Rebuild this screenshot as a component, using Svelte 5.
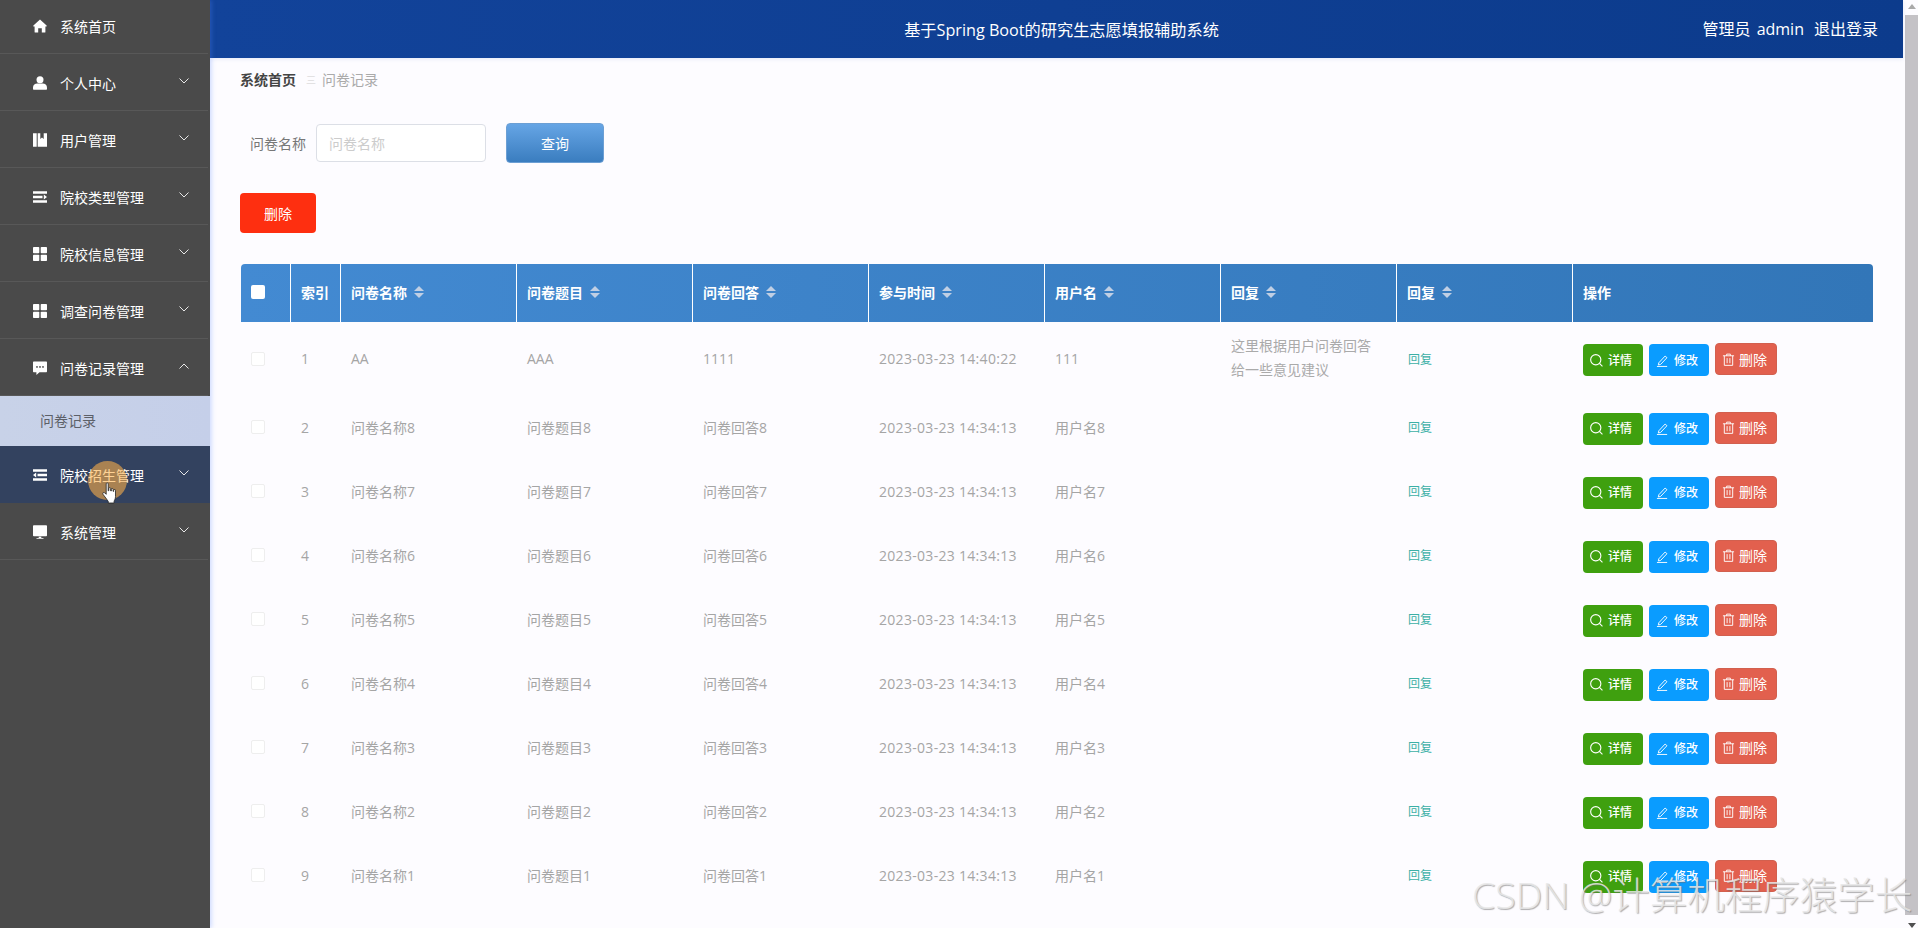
<script>
  const menu = [
    { label: '系统首页', icon: 'home' },
    { label: '个人中心', icon: 'user', arrow: 'down' },
    { label: '用户管理', icon: 'book', arrow: 'down' },
    { label: '院校类型管理', icon: 'list', arrow: 'down' },
    { label: '院校信息管理', icon: 'grid', arrow: 'down' },
    { label: '调查问卷管理', icon: 'grid', arrow: 'down' },
    { label: '问卷记录管理', icon: 'chat', arrow: 'up', sub: '问卷记录' },
    { label: '院校招生管理', icon: 'outdent', arrow: 'down', hover: true },
    { label: '系统管理', icon: 'monitor', arrow: 'down' }
  ];

  const columns = ['问卷名称', '问卷题目', '问卷回答', '参与时间', '用户名', '回复', '回复'];

  const rows = [
    { name: 'AA', title: 'AAA', answer: '1111', time: '2023-03-23 14:40:22', user: '111', reply: '这里根据用户问卷回答给一些意见建议' }
  ];
  for (let n = 8; n >= 1; n--) {
    rows.push({
      name: '问卷名称' + n,
      title: '问卷题目' + n,
      answer: '问卷回答' + n,
      time: '2023-03-23 14:34:13',
      user: '用户名' + n,
      reply: ''
    });
  }
</script>

<div class="page">
  <aside class="sidebar">
    <nav class="menu">
      {#each menu as item}
        <div class="item" class:hover={item.hover}>
          <svg class="icon" viewBox="0 0 14 14" fill="#fff">
            {#if item.icon === 'home'}
              <path d="M7 .4 .4 6.500c-.4.500 0 1.100.6 1.100h.6V13c0 .4.200.6.600.6h3V9.200h3.600v4.400h3c.4 0 .6-.2.600-.6V7.600h.6c.6 0 1-.6.6-1.100z" />
            {:else if item.icon === 'user'}
              <circle cx="7" cy="3.700" r="3.500" />
              <path d="M0 11.500c0-2.500 2-3.900 4.300-3.900h5.400C12 7.600 14 9 14 11.500v1.300c0 .6-.4 1-1 1H1c-.6 0-1-.4-1-1z" />
            {:else if item.icon === 'book'}
              <path d="M0 .3h3.700v13.400H0zM4.700 .3h2.600v5.600l1.700-1.400 1.700 1.400V.3H14v13.400H4.700z" />
            {:else if item.icon === 'list'}
              <path d="M0 1.200h14v2.500H0zM0 5.800h9.500V8.200H0zM10.800 4.600 14 7l-3.200 2.400zM0 10.300h14v2.500H0z" />
            {:else if item.icon === 'grid'}
              <rect x="0" y="0" width="6.300" height="6.300" rx=".8" />
              <rect x="7.700" y="0" width="6.300" height="6.300" rx=".8" />
              <rect x="0" y="7.700" width="6.300" height="6.300" rx=".8" />
              <rect x="7.700" y="7.700" width="6.300" height="6.300" rx=".8" />
            {:else if item.icon === 'chat'}
              <path d="M1 .6h12c.6 0 1 .4 1 1v8.600c0 .6-.4 1-1 1H6.500L3.400 14V11.200H1c-.6 0-1-.4-1-1V1.600c0-.6.4-1 1-1z" />
              <circle cx="4" cy="5.900" r=".9" fill="#4a4a4a" />
              <circle cx="7" cy="5.900" r=".9" fill="#4a4a4a" />
              <circle cx="10" cy="5.900" r=".9" fill="#4a4a4a" />
            {:else if item.icon === 'outdent'}
              <path d="M0 1.200h14v2.500H0zM4.500 5.800H14V8.200H4.500zM3.200 4.600 0 7l3.200 2.400zM0 10.300h14v2.500H0z" />
            {:else if item.icon === 'monitor'}
              <path d="M.8 .3h12.400c.4 0 .8.400.8.800v9.300c0 .4-.4.800-.8.800H.8c-.4 0-.8-.4-.8-.8V1.100C0 .7.400.3.800.3zM5.700 11.800h2.600v1.100h2.200v.9h-7v-.9h2.200z" />
            {/if}
          </svg>
          <span class="label">{item.label}</span>
          {#if item.arrow}
            <svg class="arrow" viewBox="0 0 10 6" fill="none" stroke="#e8e8e8" stroke-width="1">
              {#if item.arrow === 'up'}
                <path d="M.5 5.500 5 1l4.500 4.500" />
              {:else}
                <path d="M.5 .5 5 5l4.500-4.500" />
              {/if}
            </svg>
          {/if}
          {#if item.hover}
            <span class="click-mark"></span>
            <svg class="hand" viewBox="0 0 16 22">
              <path d="M4.200 1.800c0-1.300 2-1.300 2 0v7l.6-.1V6.500c0-1.200 1.900-1.200 1.900 0v2.400l.6.100V7.300c0-1.100 1.800-1.100 1.800 0v2l.6.100V8.300c0-1.100 1.800-1.100 1.800 0v6.200c0 2.600-1 3.300-1.400 4.800v1.700H6.300v-1.500C5 17.200 2.800 15 1 12.300c-.8-1.200.6-2.400 1.700-1.500l1.500 1.500z" fill="#fff" stroke="#222" stroke-width=".8" />
            </svg>
          {/if}
        </div>
        {#if item.sub}
          <div class="sub-item">{item.sub}</div>
        {/if}
      {/each}
    </nav>
  </aside>

  <div class="content">
    <header class="topbar">
      <div class="title">基于Spring Boot的研究生志愿填报辅助系统</div>
      <div class="account">
        <span class="who">管理员 admin</span>
        <span>退出登录</span>
      </div>
    </header>

    <main class="main">
      <div class="crumbs">
        <b>系统首页</b>
        <span class="sep">三</span>
        <span class="current">问卷记录</span>
      </div>

      <div class="search">
        <label class="search-label" for="q">问卷名称</label>
        <input class="search-input" id="q" type="text" placeholder="问卷名称" />
        <button class="search-btn">查询</button>
      </div>

      <button class="remove-btn">删除</button>

      <table class="grid-table">
        <colgroup>
          <col style="width: 49px" />
          <col style="width: 50px" />
          {#each columns as c}
            <col style="width: 176px" />
          {/each}
          <col />
        </colgroup>
        <thead>
          <tr>
            <th><span class="check head"></span></th>
            <th>索引</th>
            {#each columns as c}
              <th>
                <span class="th-inner">
                  {c}
                  <span class="sort"><i class="up"></i><i class="down"></i></span>
                </span>
              </th>
            {/each}
            <th>操作</th>
          </tr>
        </thead>
        <tbody>
          {#each rows as row, i}
            <tr>
              <td><span class="check"></span></td>
              <td>{i + 1}</td>
              <td>{row.name}</td>
              <td>{row.title}</td>
              <td>{row.answer}</td>
              <td class="time">{row.time}</td>
              <td>{row.user}</td>
              <td><div class="reply-text">{row.reply}</div></td>
              <td><span class="reply-link">回复</span></td>
              <td class="ops">
                <div class="ops-inner">
                  <button class="op detail">
                    <svg viewBox="0 0 14 14" fill="none" stroke="#fff" stroke-width="1.200">
                      <circle cx="6.200" cy="6.200" r="5.500" />
                      <path d="m10.200 10.200 3.200 3.200" />
                    </svg>
                    详情
                  </button>
                  <button class="op edit">
                    <svg viewBox="0 0 14 14" fill="none" stroke="#fff" stroke-width="1">
                      <path d="M3 9.500 9.800 2.200l2 1.800L5 11.200l-2.500.6zM1 13.400h11" />
                    </svg>
                    修改
                  </button>
                  <button class="op del">
                    <svg viewBox="0 0 14 14" fill="none" stroke="#fff" stroke-width="1">
                      <path d="M1 3h12M5 3V1.200h4V3M2.500 3v10.300h9V3M5.500 5.500v5.500M8.500 5.500v5.500" />
                    </svg>
                    删除
                  </button>
                </div>
              </td>
            </tr>
          {/each}
        </tbody>
      </table>
    </main>
  </div>

  <div class="scrollbar">
    <i class="sb-up"></i>
    <div class="sb-thumb"></div>
    <i class="sb-down"></i>
  </div>

  <div class="watermark">CSDN @计算机程序猿学长</div>
</div>

<style>
  :global(body) {
    margin: 0;
    overflow: hidden;
    background: #fdfcff;
  }

  .page {
    position: relative;
    display: flex;
    width: 1918px;
    height: 928px;
    overflow: hidden;
    font-family: "Open Sans", "Noto Sans CJK SC", sans-serif;
    font-size: 14px;
    background: #fdfcff;
  }

  .sidebar {
    flex: none;
    width: 210px;
    background: #4a4a4a;
    box-shadow: 2px 0 4px rgba(90, 140, 255, 0.25);
    z-index: 1;
  }

  .menu {
    margin-top: -3px;
  }

  .item {
    position: relative;
    display: flex;
    align-items: center;
    box-sizing: border-box;
    height: 57px;
    margin-right: 2px;
    padding-top: 2px;
    padding-left: 33px;
    color: #fff;
    border-bottom: 1px solid #585858;
  }

  .item.hover {
    margin-right: 0;
    padding-right: 2px;
    background: #33425f;
    border-bottom-color: #33425f;
  }

  .icon {
    flex: none;
    width: 14px;
    height: 14px;
    margin-right: 13px;
  }

  .label {
    white-space: nowrap;
  }

  .arrow {
    position: absolute;
    left: 179px;
    top: 24px;
    width: 10px;
    height: 6px;
  }

  .sub-item {
    display: flex;
    align-items: center;
    box-sizing: border-box;
    height: 50px;
    padding: 0 0 2px 40px;
    color: #5c6068;
    background: linear-gradient(90deg, #c8d2e8, #c5cfe9);
  }

  .click-mark {
    position: absolute;
    left: 88px;
    top: 15px;
    width: 39px;
    height: 39px;
    border-radius: 50%;
    background: rgba(255, 178, 72, 0.58);
  }

  .hand {
    position: absolute;
    left: 102px;
    top: 36px;
    width: 16px;
    height: 22px;
  }

  .content {
    flex: none;
    width: 1693px;
    display: flex;
    flex-direction: column;
  }

  .topbar {
    position: relative;
    flex: none;
    display: flex;
    align-items: center;
    justify-content: center;
    box-sizing: border-box;
    height: 58px;
    padding-left: 10px;
    color: #fff;
    background: linear-gradient(90deg, #12439a, #0c3b8c);
    box-shadow: 0 1px 4px rgba(90, 120, 200, 0.15);
  }

  .title {
    font-size: 16.200px;
  }

  .account {
    position: absolute;
    right: 25px;
    top: 0;
    display: flex;
    gap: 10px;
    line-height: 58px;
    font-size: 16px;
  }

  .who {
    word-spacing: 2px;
  }

  .main {
    padding-left: 30px;
  }

  .crumbs {
    display: flex;
    align-items: center;
    box-sizing: border-box;
    height: 44px;
    padding-bottom: 2px;
    color: #aaa;
  }

  .crumbs b {
    color: #444;
  }

  .sep {
    margin: 0 6px 0 10px;
    width: 10px;
    font-size: 10px;
    color: #ddd;
  }

  .search {
    display: flex;
    align-items: center;
    height: 40px;
    margin-top: 21px;
    padding-left: 10px;
  }

  .search-label {
    width: 66px;
    color: #777;
  }

  .search-input {
    box-sizing: border-box;
    width: 170px;
    height: 38px;
    padding: 0 12px;
    font: inherit;
    border: 1px solid #dcdfe6;
    border-radius: 4px;
    outline: none;
    background: #fff;
  }

  .search-input::placeholder {
    color: #ccc;
  }

  .search-btn {
    box-sizing: border-box;
    width: 98px;
    height: 40px;
    margin-left: 20px;
    font: inherit;
    color: #fff;
    border: 1px solid #6c9fd4;
    border-radius: 4px;
    background: linear-gradient(180deg, #66a5e5, #3a7dbf);
  }

  .remove-btn {
    display: block;
    box-sizing: border-box;
    width: 76px;
    height: 40px;
    margin-top: 30px;
    font: inherit;
    color: #fff;
    border: 0;
    border-radius: 4px;
    background: #fe2f10;
  }

  .grid-table {
    width: 1632px;
    margin: 31px 0 0 1px;
    table-layout: fixed;
    border-collapse: separate;
    border-spacing: 0;
  }

  thead tr {
    background: linear-gradient(90deg, #438ad2, #3276b8);
  }

  th {
    box-sizing: border-box;
    height: 58px;
    padding: 0 0 2px 10px;
    text-align: left;
    color: #fff;
    border-left: 1px solid #fff;
  }

  th:first-child {
    border-left: 0;
    border-top-left-radius: 4px;
  }

  th:last-child {
    border-top-right-radius: 4px;
  }

  .th-inner {
    display: flex;
    align-items: center;
    gap: 7px;
  }

  .sort {
    display: inline-flex;
    flex-direction: column;
    gap: 2px;
  }

  .sort i {
    display: block;
    width: 0;
    height: 0;
    border-left: 5px solid transparent;
    border-right: 5px solid transparent;
  }

  .sort .up {
    border-bottom: 5px solid #c0cfe4;
  }

  .sort .down {
    border-top: 5px solid #c0cfe4;
  }

  td {
    box-sizing: border-box;
    height: 64px;
    padding: 11.500px 10px 11.500px 11px;
    color: #a5a5a5;
    line-height: 25px;
  }

  .time {
    letter-spacing: 0.3px;
  }

  .check {
    display: block;
    box-sizing: border-box;
    width: 14px;
    height: 14px;
    border: 1px solid #eeeeee;
    border-radius: 2px;
    background: #fff;
  }

  .check.head {
    border: 0;
  }

  td:first-child {
    padding-left: 10px;
  }

  .reply-text {
    width: 150px;
    margin-bottom: 2px;
    line-height: 24px;
    color: #aaa;
  }

  .reply-text:empty {
    margin-bottom: 0;
  }

  .reply-link {
    margin-left: 1px;
    font-size: 12px;
    color: #3cb0a6;
  }

  .ops {
    padding-top: 14px;
    padding-bottom: 11px;
  }

  .ops-inner {
    display: flex;
    align-items: center;
    gap: 6px;
  }

  .op {
    display: flex;
    align-items: center;
    gap: 5px;
    box-sizing: border-box;
    width: 60px;
    height: 32px;
    padding: 0 0 0 7px;
    font: inherit;
    font-size: 12px;
    font-weight: 500;
    color: #fff;
    border: 0;
    border-radius: 4px;
  }

  .op svg {
    width: 13px;
    height: 13px;
    flex: none;
  }

  .detail {
    background: #3fa00f;
  }

  .edit {
    background: #0a9cff;
  }

  .del {
    width: 62px;
    margin-bottom: 2px;
    padding-left: 6px;
    gap: 4px;
    font-size: 14px;
    font-weight: 400;
    border: 1px solid #d2604f;
    background: #e2604e;
  }

  .scrollbar {
    flex: none;
    display: flex;
    flex-direction: column;
    align-items: flex-end;
    width: 15px;
    height: 928px;
  }

  .sb-thumb {
    width: 13px;
    height: 900px;
    background: #c4c2c6;
  }

  .sb-up,
  .sb-down {
    display: block;
    width: 0;
    height: 0;
    margin-right: 2px;
    border-left: 4.500px solid transparent;
    border-right: 4.500px solid transparent;
  }

  .sb-up {
    margin-top: 4px;
    margin-bottom: 6px;
    border-bottom: 5px solid #a9a9a9;
  }

  .sb-down {
    margin-top: 8px;
    border-top: 5px solid #505050;
  }

  .watermark {
    position: absolute;
    left: 1472px;
    top: 873px;
    font-size: 37.500px;
    font-weight: 300;
    line-height: 44px;
    white-space: nowrap;
    color: rgba(232, 232, 232, 0.85);
    text-shadow: 1px 1px 1px rgba(110, 110, 110, 0.55);
  }
</style>
